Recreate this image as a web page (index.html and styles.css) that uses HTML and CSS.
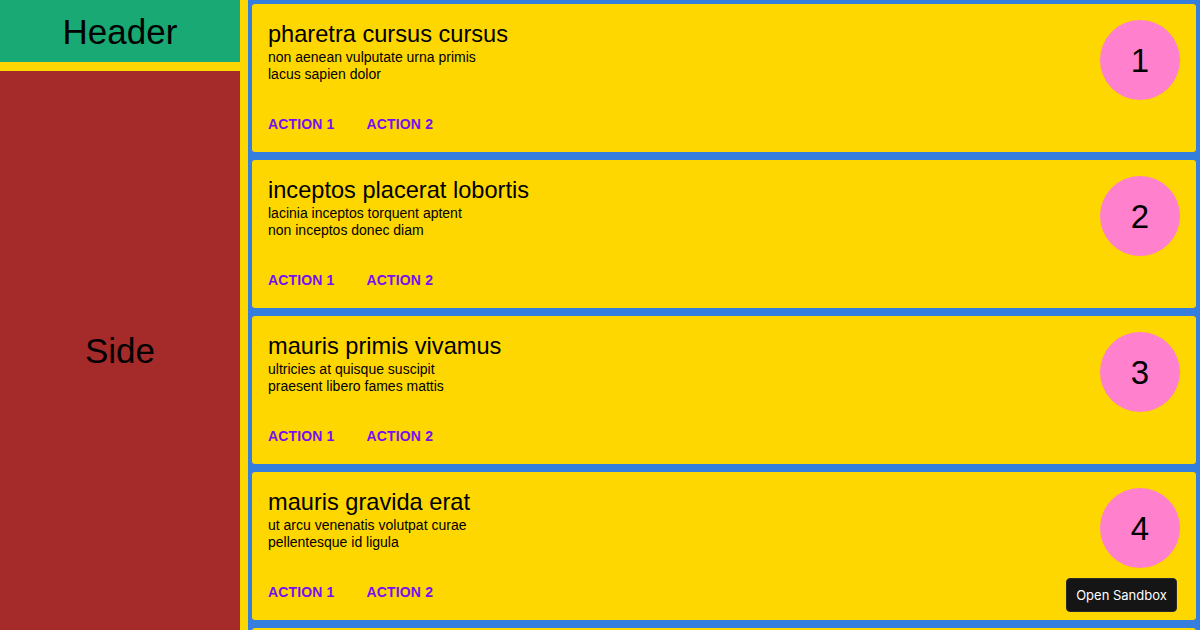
FILE: index.html
```html
<!DOCTYPE html>
<html>
<head>
<meta charset="utf-8">
<link rel="stylesheet" href="styles.css">
</head>
<body>
<div class="layout">
  <div class="left">
    <header class="header">Header</header>
    <aside class="side">Side</aside>
  </div>
  <main class="main">
    <div class="card">
      <div class="card-top">
        <div class="card-text">
          <div class="title">pharetra cursus cursus</div>
          <div class="subs">
            <div class="sub">non aenean vulputate urna primis</div>
            <div class="sub">lacus sapien dolor</div>
          </div>
        </div>
        <div class="badge">1</div>
      </div>
      <div class="actions"><span class="action">Action 1</span><span class="action">Action 2</span></div>
    </div>
    <div class="card">
      <div class="card-top">
        <div class="card-text">
          <div class="title">inceptos placerat lobortis</div>
          <div class="subs">
            <div class="sub">lacinia inceptos torquent aptent</div>
            <div class="sub">non inceptos donec diam</div>
          </div>
        </div>
        <div class="badge">2</div>
      </div>
      <div class="actions"><span class="action">Action 1</span><span class="action">Action 2</span></div>
    </div>
    <div class="card">
      <div class="card-top">
        <div class="card-text">
          <div class="title">mauris primis vivamus</div>
          <div class="subs">
            <div class="sub">ultricies at quisque suscipit</div>
            <div class="sub">praesent libero fames mattis</div>
          </div>
        </div>
        <div class="badge">3</div>
      </div>
      <div class="actions"><span class="action">Action 1</span><span class="action">Action 2</span></div>
    </div>
    <div class="card">
      <div class="card-top">
        <div class="card-text">
          <div class="title">mauris gravida erat</div>
          <div class="subs">
            <div class="sub">ut arcu venenatis volutpat curae</div>
            <div class="sub">pellentesque id ligula</div>
          </div>
        </div>
        <div class="badge">4</div>
      </div>
      <div class="actions"><span class="action">Action 1</span><span class="action">Action 2</span></div>
    </div>
    <div class="card"></div>
  </main>
</div>
<button class="sandbox">Open Sandbox</button>
</body>
</html>
```
FILE: styles.css
```css
html, body {
  margin: 0;
  padding: 0;
  height: 100%;
  overflow: hidden;
}
body {
  background: #ffd700;
  font-family: "Liberation Sans", Arial, sans-serif;
  color: #000;
}
.layout {
  display: flex;
  gap: 8px;
  height: 630px;
}
.left {
  width: 240px;
  flex: 0 0 240px;
  display: flex;
  flex-direction: column;
  gap: 9px;
}
.header {
  height: 62px;
  padding-top: 2px;
  box-sizing: border-box;
  background: #19a974;
  display: flex;
  align-items: center;
  justify-content: center;
  font-size: 35px;
}
.side {
  flex: 1;
  background: #a52a2a;
  display: flex;
  align-items: center;
  justify-content: center;
  font-size: 35px;
}
.main {
  flex: 1;
  background: #357edd;
  padding: 4px;
  display: flex;
  flex-direction: column;
  gap: 8px;
  overflow: hidden;
}
.card {
  flex: 0 0 148px;
  height: 148px;
  box-sizing: border-box;
  background: #ffd700;
  border-radius: 3px;
  padding: 16px;
  display: flex;
  flex-direction: column;
}
.card-top {
  display: flex;
  justify-content: space-between;
  align-items: flex-start;
}
.title {
  font-size: 23.6px;
  line-height: 28px;
}
.subs {
  padding-top: 1px;
}
.sub {
  font-size: 14px;
  line-height: 17px;
}
.badge {
  width: 80px;
  height: 80px;
  border-radius: 50%;
  background: #ff80cc;
  display: flex;
  align-items: center;
  justify-content: center;
  font-size: 33px;
  padding-top: 2px;
  box-sizing: border-box;
}
.actions {
  margin-top: auto;
  margin-bottom: 4px;
  display: flex;
  gap: 32px;
}
.action {
  font-size: 14px;
  line-height: 16px;
  font-weight: bold;
  letter-spacing: 0.15px;
  text-transform: uppercase;
  color: #750ff2;
}
.sandbox {
  position: fixed;
  right: 23px;
  bottom: 18px;
  width: 111px;
  height: 34px;
  background: #151515;
  color: #fff;
  border: 1px solid #2a2a2a;
  border-radius: 4px;
  font-family: Inter, "Liberation Sans", sans-serif;
  font-size: 13px;
  padding: 0;
}
```
